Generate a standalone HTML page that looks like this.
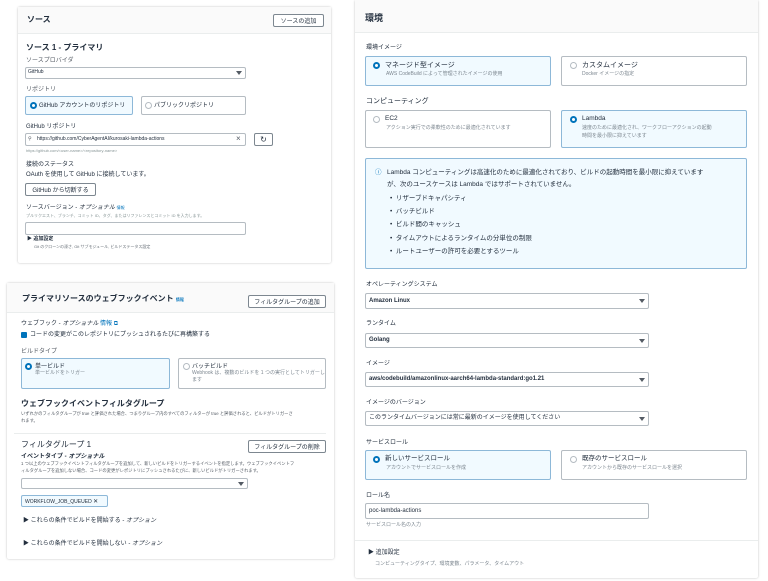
<!DOCTYPE html>
<html><head><meta charset="utf-8"><style>
*{margin:0;padding:0;box-sizing:border-box}
body{width:768px;height:581px;background:#fff;position:relative;overflow:hidden;font-family:"Liberation Sans","Noto Sans CJK JP",sans-serif;color:#232f3e}
.a{position:absolute;white-space:nowrap;line-height:1}
.panel{position:absolute;background:#fff;box-shadow:0 0 2px rgba(0,0,0,.25);border-radius:2px}
.hd{position:absolute;left:0;right:0;top:0;background:#fafafa;border-bottom:1px solid #eaeded}
.box{position:absolute;border:1px solid #b5bcc2;background:#fff;border-radius:2px}
.sel{background:#f1faff;border-color:#8db8d8}
.btn{position:absolute;border:1px solid #7d8790;border-radius:2px;background:#fff;font-size:6px;color:#232f3e;display:flex;align-items:center;justify-content:center}
.inp{position:absolute;border:1px solid #b5bcc2;border-radius:2px;background:#fff}
.tri{position:absolute;width:0;height:0;border-left:3px solid transparent;border-right:3px solid transparent;border-top:4px solid #545b64}
.r{position:absolute;width:7px;height:7px;border-radius:50%;border:1px solid #b5bcc2;background:#fff}
.r.on{border:2px solid #0073bb}
.lb{font-size:6px;color:#232f3e}
.sm{font-size:5px;color:#7d8790}
.b{font-weight:bold}
</style></head><body>

<!-- Panel 1 -->
<div class="panel" style="left:18px;top:7px;width:313px;height:256px">
 <div class="hd" style="height:27px"></div>
</div>
<div class="a b" style="left:27px;top:16px;font-size:8px">ソース</div>
<div class="btn" style="left:273px;top:14px;width:51px;height:13px">ソースの追加</div>
<div class="a b" style="left:26px;top:44px;font-size:8px">ソース 1 - プライマリ</div>
<div class="a lb" style="left:26px;top:58px;color:#545b64">ソースプロバイダ</div>
<div class="inp" style="left:25px;top:67px;width:221px;height:12px"></div>
<div class="a sm" style="left:28px;top:70px;color:#232f3e">GitHub</div>
<div class="tri" style="left:236px;top:71px"></div>
<div class="a lb" style="left:26px;top:87px;color:#545b64">リポジトリ</div>
<div class="box sel" style="left:25px;top:96px;width:108px;height:19px"></div>
<div class="r on" style="left:30px;top:102px"></div>
<div class="a lb" style="left:39px;top:103px">GitHub アカウントのリポジトリ</div>
<div class="box" style="left:141px;top:96px;width:105px;height:19px"></div>
<div class="r" style="left:145px;top:102px"></div>
<div class="a lb" style="left:154px;top:103px">パブリックリポジトリ</div>
<div class="a lb" style="left:26px;top:124px">GitHub リポジトリ</div>
<div class="inp" style="left:25px;top:133px;width:221px;height:13px"></div>
<div class="a sm" style="left:28px;top:137px;color:#545b64">⚲</div>
<div class="a sm" style="left:37px;top:137px;color:#232f3e">https://github.com/CyberAgentAI/kurosaki-lambda-actions</div>
<div class="a" style="left:236px;top:135px;font-size:8px;color:#545b64">×</div>
<div class="btn" style="left:254px;top:133px;width:19px;height:13px;font-size:8px">↻</div>
<div class="a" style="left:26px;top:149px;font-size:4px;color:#879596">https://github.com/&lt;user-name&gt;/&lt;repository-name&gt;</div>
<div class="a lb" style="left:26px;top:162px">接続のステータス</div>
<div class="a lb" style="left:26px;top:172px">OAuth を使用して GitHub に接続しています。</div>
<div class="btn" style="left:25px;top:183px;width:71px;height:13px">GitHub から切断する</div>
<div class="a lb" style="left:26px;top:205px">ソースバージョン - <i>オプショナル</i> <span style="color:#0073bb;font-size:4px">情報</span></div>
<div class="a" style="left:26px;top:214px;font-size:4px;color:#879596">プルリクエスト、ブランチ、コミット ID、タグ、またはリファレンスとコミット ID を入力します。</div>
<div class="inp" style="left:25px;top:222px;width:221px;height:13px"></div>
<div class="a" style="left:27px;top:237px;font-size:5px">▶ <b>追加設定</b></div>
<div class="a" style="left:34px;top:245px;font-size:4px;color:#687078">Git のクローンの深さ, Git サブモジュール, ビルドステータス設定</div>

<!-- Panel 2 -->
<div class="panel" style="left:7px;top:283px;width:327px;height:276px">
 <div class="hd" style="height:30px"></div>
</div>
<div class="a b" style="left:22px;top:295px;font-size:8px">プライマリソースのウェブフックイベント <span style="color:#0073bb;font-size:4px">情報</span></div>
<div class="btn" style="left:248px;top:295px;width:78px;height:13px">フィルタグループの追加</div>
<div class="a lb" style="left:21px;top:321px">ウェブフック - <i>オプショナル</i> <span style="color:#0073bb">情報 ⧉</span></div>
<div style="position:absolute;left:21px;top:332px;width:6px;height:6px;background:#0073bb;border-radius:1px"></div>
<div class="a lb" style="left:30px;top:332px">コードの変更がこのレポジトリにプッシュされるたびに再構築する</div>
<div class="a lb" style="left:21px;top:349px;color:#545b64">ビルドタイプ</div>
<div class="box sel" style="left:21px;top:358px;width:149px;height:31px"></div>
<div class="r on" style="left:25px;top:363px"></div>
<div class="a lb" style="left:35px;top:364px">単一ビルド</div>
<div class="a sm" style="left:35px;top:371px">単一ビルドをトリガー</div>
<div class="box" style="left:178px;top:358px;width:148px;height:31px"></div>
<div class="r" style="left:183px;top:363px"></div>
<div class="a lb" style="left:192px;top:364px">バッチビルド</div>
<div class="a sm" style="left:192px;top:371px">Webhook は、複数のビルドを 1 つの実行としてトリガーし</div>
<div class="a sm" style="left:192px;top:378px">ます</div>
<div class="a b" style="left:21px;top:400px;font-size:8px">ウェブフックイベントフィルタグループ</div>
<div class="a" style="left:21px;top:412px;font-size:4.3px;color:#545b64">いずれかのフィルタグループが true と評価された場合、つまりグループ内のすべてのフィルターが true と評価されると、ビルドがトリガーさ</div>
<div class="a" style="left:21px;top:419px;font-size:4.3px;color:#545b64">れます。</div>
<div style="position:absolute;left:14px;top:433px;width:312px;height:1px;background:#eaeded"></div>
<div class="a" style="left:21px;top:441px;font-size:8px">フィルタグループ 1</div>
<div class="btn" style="left:248px;top:440px;width:78px;height:13px">フィルタグループの削除</div>
<div class="a lb b" style="left:21px;top:454px">イベントタイプ - <i>オプショナル</i></div>
<div class="a" style="left:21px;top:462px;font-size:4.3px;color:#545b64">1 つ以上のウェブフックイベントフィルタグループを追加して、新しいビルドをトリガーするイベントを指定します。ウェブフックイベントフ</div>
<div class="a" style="left:21px;top:469px;font-size:4.3px;color:#545b64">ィルタグループを追加しない場合、コードの変更がレポジトリにプッシュされるたびに、新しいビルドがトリガーされます。</div>
<div class="inp" style="left:21px;top:478px;width:227px;height:11px"></div>
<div class="tri" style="left:238px;top:482px"></div>
<div style="position:absolute;left:21px;top:495px;width:87px;height:12px;background:#f1faff;border:1px solid #8db8d8;border-radius:2px"></div>
<div class="a" style="left:25px;top:499px;font-size:5px;color:#232f3e">WORKFLOW_JOB_QUEUED <span style="font-size:6px">✕</span></div>
<div class="a" style="left:23px;top:518px;font-size:6px">▶ これらの条件でビルドを開始する - <i>オプション</i></div>
<div class="a" style="left:23px;top:541px;font-size:6px">▶ これらの条件でビルドを開始しない - <i>オプション</i></div>

<!-- Right Panel -->
<div class="panel" style="left:355px;top:0px;width:403px;height:578px">
 <div class="hd" style="height:33px"></div>
 <div style="position:absolute;left:0;right:0;top:540px;height:1px;background:#eaeded"></div>
</div>
<div class="a b" style="left:365px;top:14px;font-size:9px">環境</div>
<div class="a lb" style="left:366px;top:45px">環境イメージ</div>
<div class="box sel" style="left:365px;top:56px;width:186px;height:30px"></div>
<div class="r on" style="left:373px;top:62px"></div>
<div class="a" style="left:385px;top:62px;font-size:7px">マネージド型イメージ</div>
<div class="a sm" style="left:386px;top:72px">AWS CodeBuild によって管理されたイメージの使用</div>
<div class="box" style="left:561px;top:56px;width:186px;height:30px"></div>
<div class="r" style="left:570px;top:62px"></div>
<div class="a" style="left:582px;top:62px;font-size:7px">カスタムイメージ</div>
<div class="a sm" style="left:582px;top:72px">Docker イメージの指定</div>
<div class="a" style="left:366px;top:98px;font-size:7px">コンピューティング</div>
<div class="box" style="left:365px;top:110px;width:186px;height:38px"></div>
<div class="r" style="left:373px;top:116px"></div>
<div class="a" style="left:385px;top:116px;font-size:6.5px">EC2</div>
<div class="a sm" style="left:386px;top:126px">アクション実行での柔軟性のために最適化されています</div>
<div class="box sel" style="left:561px;top:110px;width:186px;height:38px"></div>
<div class="r on" style="left:570px;top:116px"></div>
<div class="a" style="left:582px;top:116px;font-size:6.5px">Lambda</div>
<div class="a sm" style="left:582px;top:126px">速度のために最適化され、ワークフローアクションの起動</div>
<div class="a sm" style="left:582px;top:134px">時間を最小限に抑えています</div>
<div class="box" style="left:365px;top:158px;width:382px;height:111px;background:#f1faff;border-color:#8db8d8"></div>
<div class="a" style="left:375px;top:170px;font-size:6.5px;color:#0073bb">ⓘ</div>
<div class="a" style="left:387px;top:170px;font-size:6.5px">Lambda コンピューティングは高速化のために最適化されており、ビルドの起動時間を最小限に抑えています</div>
<div class="a" style="left:387px;top:182px;font-size:6.5px">が、次のユースケースは Lambda ではサポートされていません。</div>
<div class="a" style="left:390px;top:196px;font-size:6.5px">•&nbsp; リザーブドキャパシティ</div>
<div class="a" style="left:390px;top:209px;font-size:6.5px">•&nbsp; バッチビルド</div>
<div class="a" style="left:390px;top:222px;font-size:6.5px">•&nbsp; ビルド間のキャッシュ</div>
<div class="a" style="left:390px;top:236px;font-size:6.5px">•&nbsp; タイムアウトによるランタイムの分単位の制限</div>
<div class="a" style="left:390px;top:249px;font-size:6.5px">•&nbsp; ルートユーザーの許可を必要とするツール</div>

<div class="a lb" style="left:366px;top:282px">オペレーティングシステム</div>
<div class="inp" style="left:365px;top:293px;width:284px;height:16px"></div>
<div class="a lb b" style="left:369px;top:298px">Amazon Linux</div>
<div class="tri" style="left:639px;top:299px"></div>
<div class="a lb" style="left:366px;top:321px">ランタイム</div>
<div class="inp" style="left:365px;top:333px;width:284px;height:15px"></div>
<div class="a lb b" style="left:369px;top:337px">Golang</div>
<div class="tri" style="left:639px;top:339px"></div>
<div class="a lb" style="left:366px;top:361px">イメージ</div>
<div class="inp" style="left:365px;top:372px;width:284px;height:15px"></div>
<div class="a lb b" style="left:369px;top:376px">aws/codebuild/amazonlinux-aarch64-lambda-standard:go1.21</div>
<div class="tri" style="left:639px;top:378px"></div>
<div class="a lb" style="left:366px;top:400px">イメージのバージョン</div>
<div class="inp" style="left:365px;top:411px;width:284px;height:15px"></div>
<div class="a lb" style="left:369px;top:415px">このランタイムバージョンには常に最新のイメージを使用してください</div>
<div class="tri" style="left:639px;top:417px"></div>
<div class="a lb" style="left:366px;top:440px">サービスロール</div>
<div class="box sel" style="left:365px;top:450px;width:186px;height:30px"></div>
<div class="r on" style="left:373px;top:456px"></div>
<div class="a" style="left:385px;top:456px;font-size:6.5px">新しいサービスロール</div>
<div class="a sm" style="left:386px;top:466px">アカウントでサービスロールを作成</div>
<div class="box" style="left:561px;top:450px;width:186px;height:30px"></div>
<div class="r" style="left:570px;top:456px"></div>
<div class="a" style="left:582px;top:456px;font-size:6.5px">既存のサービスロール</div>
<div class="a sm" style="left:582px;top:466px">アカウントから既存のサービスロールを選択</div>
<div class="a lb" style="left:366px;top:493px">ロール名</div>
<div class="inp" style="left:365px;top:503px;width:284px;height:16px"></div>
<div class="a lb" style="left:369px;top:508px">poc-lambda-actions</div>
<div class="a sm" style="left:366px;top:523px">サービスロール名の入力</div>
<div class="a" style="left:368px;top:550px;font-size:6px">▶ 追加設定</div>
<div class="a sm" style="left:375px;top:562px">コンピューティングタイプ、環境変数、パラメータ、タイムアウト</div>
</body></html>
